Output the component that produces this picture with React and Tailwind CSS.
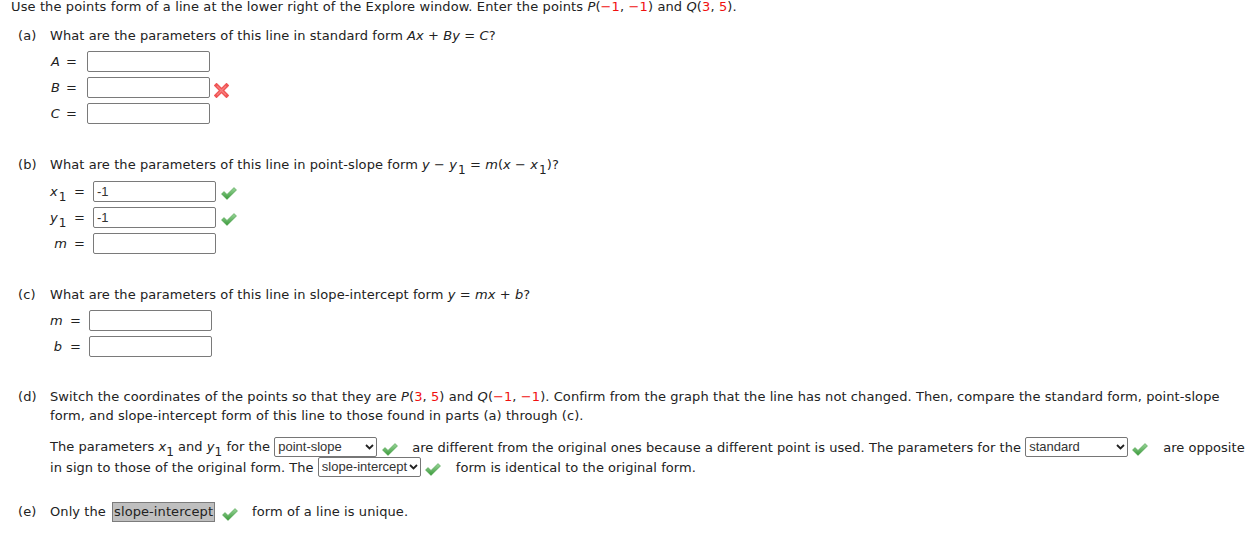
import React from "react";

const Check = () => (
  <svg width="16" height="13" viewBox="0 0 16 13" className="shrink-0 translate-y-[2px]">
    <defs>
      <linearGradient id="chk" x1="0" y1="0" x2="0" y2="1">
        <stop offset="0" stopColor="#9ad69a" />
        <stop offset="1" stopColor="#3a9a3a" />
      </linearGradient>
    </defs>
    <path d="M0.5 7 L3 4.6 L6 7.4 L13 0.6 L15.5 3 L6 12.4 Z" fill="url(#chk)" stroke="#4b9f4b" strokeWidth="0.6" strokeLinejoin="round" />
  </svg>
);

const XMark = () => (
  <svg width="15" height="15" viewBox="0 0 15 15" className="shrink-0 translate-y-[3px]">
    <path d="M2.5 2.5 L12.5 12.5 M12.5 2.5 L2.5 12.5" stroke="#f05656" strokeWidth="4" strokeLinecap="square" />
    <path d="M3 3 L12 12 M12 3 L3 12" stroke="#f78080" strokeWidth="1.2" />
  </svg>
);

const Sub = ({ children, tight }) => (
  <span className={`relative top-[5px] ${tight ? "" : "ml-[1px]"} text-[12px] not-italic`}>{children}</span>
);

const Red = ({ children }) => <span className="text-[#f01010]">{children}</span>;

const Input = ({ value = "" }) => (
  <input
    readOnly
    defaultValue={value}
    className="w-[123px] h-[21px] border border-[#7a7a7a] rounded-[2px] px-[3px] text-[13px] tracking-normal text-[#333] font-['Liberation_Sans',Arial,sans-serif] bg-white outline-none"
  />
);

const Row = ({ label, lw, eqMl, inMl, value, mark }) => (
  <div className="flex items-center h-[21px]">
    <span className="text-right italic shrink-0" style={{ width: lw }}>{label}</span>
    <span className="shrink-0" style={{ marginLeft: eqMl }}>=</span>
    <span className="shrink-0" style={{ marginLeft: inMl }}><Input value={value} /></span>
    {mark === "x" && <span className="ml-[4px]"><XMark /></span>}
    {mark === "c" && <span className="ml-[5px]"><Check /></span>}
  </div>
);

const Select = ({ value }) => (
  <span className="relative inline-flex shrink-0">
    <select
      defaultValue={value}
      className="appearance-none w-[103px] h-[20px] border border-[#767676] rounded-[2px] pl-[3px] pr-[10px] text-[13px] tracking-normal leading-[18px] text-[#333] font-['Liberation_Sans',Arial,sans-serif] bg-white outline-none"
    >
      <option value={value}>{value}</option>
    </select>
    <svg width="9" height="6" viewBox="0 0 9 6" className="absolute right-[3px] top-[7px] pointer-events-none">
      <path d="M1 1 L4.5 4.5 L8 1" stroke="#222" strokeWidth="1.8" fill="none" />
    </svg>
  </span>
);

const Part = ({ label, className = "", children }) => (
  <div className={`flex ${className}`}>
    <div className="w-[32px] shrink-0">{label}</div>
    <div className="flex-1 min-w-0">{children}</div>
  </div>
);

export default function App() {
  return (
    <div className="w-[1256px] h-[543px] bg-white text-[#222] text-[13px] tracking-[0.08px] font-['DejaVu_Sans',Verdana,sans-serif] overflow-hidden">
      <p className="pl-[11px] leading-[13px] whitespace-nowrap tracking-[0.12px]">
        Use the points form of a line at the lower right of the Explore window. Enter the points{" "}
        <i>P</i>(<Red>−1</Red>, <Red>−1</Red>) and <i>Q</i>(<Red>3</Red>, <Red>5</Red>).
      </p>

      <div className="pl-[18px]">
        <Part label="(a)" className="mt-[15px] leading-[16px]">
          <div>
            What are the parameters of this line in standard form <i>Ax</i> + <i>By</i> = <i>C</i>?
          </div>
          <div className="mt-[7px] flex flex-col gap-[5px]">
            <Row label="A" lw="10px" eqMl="6px" inMl="10px" />
            <Row label="B" lw="10px" eqMl="6px" inMl="10px" mark="x" />
            <Row label="C" lw="10px" eqMl="6px" inMl="10px" />
          </div>
        </Part>

        <Part label="(b)" className="mt-[33px] leading-[16px]">
          <div>
            What are the parameters of this line in point-slope form <i>y</i> − <i>y</i><Sub>1</Sub> = <i>m</i>(<i>x</i> − <i>x</i><Sub>1</Sub>)?
          </div>
          <div className="mt-[8px] flex flex-col gap-[5px]">
            <Row label={<span className="pr-[1px]"><i>x</i><Sub>1</Sub></span>} lw="17px" eqMl="7px" inMl="8px" value="-1" mark="c" />
            <Row label={<span className="pr-[1px]"><i>y</i><Sub>1</Sub></span>} lw="17px" eqMl="7px" inMl="8px" value="-1" mark="c" />
            <Row label="m" lw="17px" eqMl="7px" inMl="8px" />
          </div>
        </Part>

        <Part label="(c)" className="mt-[33px] leading-[16px]">
          <div>
            What are the parameters of this line in slope-intercept form <i>y</i> = <i>mx</i> + <i>b</i>?
          </div>
          <div className="mt-[7px] flex flex-col gap-[5px]">
            <Row label="m" lw="12px" eqMl="8px" inMl="8px" />
            <Row label="b" lw="12px" eqMl="8px" inMl="8px" />
          </div>
        </Part>

        <Part label="(d)" className="mt-[30px] leading-[19px]">
          <div className="whitespace-nowrap">
            Switch the coordinates of the points so that they are <i>P</i>(<Red>3</Red>, <Red>5</Red>) and <i>Q</i>(<Red>−1</Red>, <Red>−1</Red>). Confirm from the graph that the line has not changed. Then, compare the standard form, point-slope
            <br />
            form, and slope-intercept form of this line to those found in parts (a) through (c).
          </div>
          <div className="mt-[12px] whitespace-nowrap tracking-[0.04px]">
            <div className="flex items-center h-[20px]">
              <span>
                The parameters <i>x</i><Sub tight>1</Sub> and <i>y</i><Sub tight>1</Sub> for the&nbsp;
              </span>
              <Select value="point-slope" />
              <span className="ml-[5px]"><Check /></span>
              <span className="ml-[14px]">
                are different from the original ones because a different point is used. The parameters for the&nbsp;
              </span>
              <Select value="standard" />
              <span className="ml-[4px]"><Check /></span>
              <span className="ml-[15px]">are opposite</span>
            </div>
            <div className="flex items-center h-[20px]">
              <span>in sign to those of the original form. The&nbsp;</span>
              <Select value="slope-intercept" />
              <span className="ml-[4px]"><Check /></span>
              <span className="ml-[15px]">form is identical to the original form.</span>
            </div>
          </div>
        </Part>

        <Part label="(e)" className="mt-[25px] leading-[20px] items-center">
          <div className="flex items-center h-[20px] whitespace-nowrap">
            <span>Only the&nbsp;</span>
            <span className="ml-[2px] h-[20px] leading-[18px] px-[1px] border border-[#7c7c7c] bg-[#bfbfbf]">slope-intercept</span>
            <span className="ml-[7px]"><Check /></span>
            <span className="ml-[14px]">form of a line is unique.</span>
          </div>
        </Part>
      </div>
    </div>
  );
}
